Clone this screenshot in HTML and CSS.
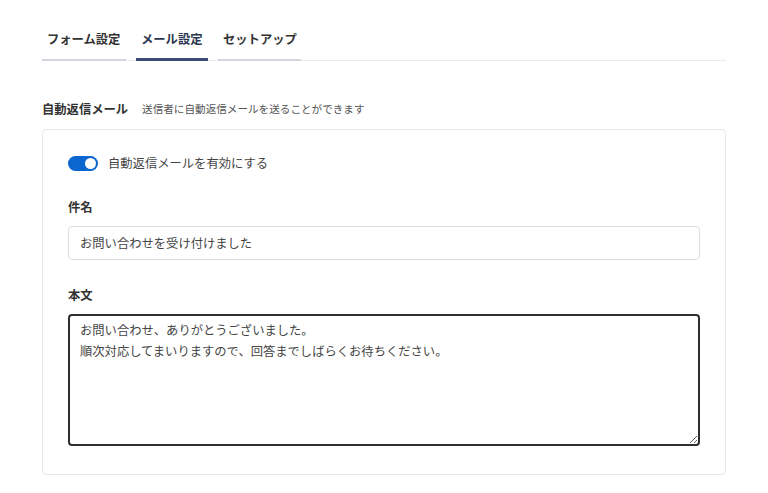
FILE: index.html
```html
<!DOCTYPE html>
<html lang="ja">
<head>
<meta charset="utf-8">
<link rel="stylesheet" href="styles.css">
</head>
<body>
<div class="page">
  <nav class="tabs">
    <a class="tab">フォーム設定</a>
    <a class="tab active">メール設定</a>
    <a class="tab">セットアップ</a>
  </nav>

  <div class="section-head">
    <h2 class="section-title">自動返信メール</h2>
    <p class="section-desc">送信者に自動返信メールを送ることができます</p>
  </div>

  <div class="card">
    <label class="switch-row">
      <span class="switch"><span class="knob"></span></span>
      <span class="switch-label">自動返信メールを有効にする</span>
    </label>

    <div class="field">
      <div class="field-label">件名</div>
      <input class="text-input" type="text" value="お問い合わせを受け付けました">
    </div>

    <div class="field">
      <div class="field-label">本文</div>
      <textarea class="text-area">お問い合わせ、ありがとうございました。
順次対応してまいりますので、回答までしばらくお待ちください。</textarea>
    </div>
  </div>
</div>
</body>
</html>
```

FILE: styles.css
```css
* { box-sizing: border-box; }
html, body { margin: 0; background: #fff; }
body {
  font-family: "Noto Sans CJK JP", "Noto Sans", sans-serif;
  color: #333;
  font-size: 12.3px;
}
.page { padding: 0 42px; }

.tabs {
  display: flex;
  gap: 10px;
  padding-top: 30px;
  border-bottom: 1px solid #e9eaed;
}
.tab {
  display: block;
  width: 84px;
  padding: 0 0 11px 5px;
  line-height: 18px;
  font-weight: 700;
  font-size: 12.3px;
  color: #333;
  border-bottom: 2px solid #d3d6dd;
  margin-bottom: -1px;
}
.tab.active {
  width: 72px;
  color: #2b3550;
  padding-bottom: 10px;
  border-bottom: 3px solid #3c4c79;
}
.tab:last-child { width: 83px; }

.section-head {
  display: flex;
  align-items: center;
  gap: 14px;
  margin-top: 39px;
  height: 18px;
}
.section-title {
  margin: 0;
  font-size: 12.3px;
  font-weight: 700;
  line-height: 18px;
  color: #333;
}
.section-desc {
  margin: 0;
  font-size: 10.6px;
  line-height: 18px;
  color: #555;
}

.card {
  margin-top: 11px;
  border: 1px solid #e8e8e8;
  border-radius: 4px;
  padding: 24px 25px 28px;
}

.switch-row {
  display: flex;
  align-items: center;
  gap: 10px;
  height: 18px;
}
.switch {
  position: relative;
  width: 30px;
  height: 15px;
  border-radius: 7.5px;
  background: #0b66d0;
  flex: none;
}
.knob {
  position: absolute;
  top: 2px;
  right: 2px;
  width: 11px;
  height: 11px;
  border-radius: 50%;
  background: #fff;
}
.switch-label {
  font-size: 12.3px;
  line-height: 18px;
  color: #444;
}

.field { margin-top: 26px; }
.field-label {
  font-size: 12.3px;
  font-weight: 700;
  line-height: 18px;
  color: #333;
  margin-bottom: 10px;
}
.text-input {
  display: block;
  width: 100%;
  height: 34px;
  border: 1px solid #dcdcdc;
  border-radius: 4px;
  padding: 0 11px;
  font-family: inherit;
  font-size: 12.3px;
  color: #444;
  background: #fff;
  outline: none;
}
.text-area {
  display: block;
  width: 100%;
  height: 132px;
  border: 2px solid #2f2f2f;
  border-radius: 4px;
  padding: 4px 10px;
  font-family: inherit;
  font-size: 12.3px;
  line-height: 21px;
  color: #444;
  background: #fff;
  outline: none;
}
```
